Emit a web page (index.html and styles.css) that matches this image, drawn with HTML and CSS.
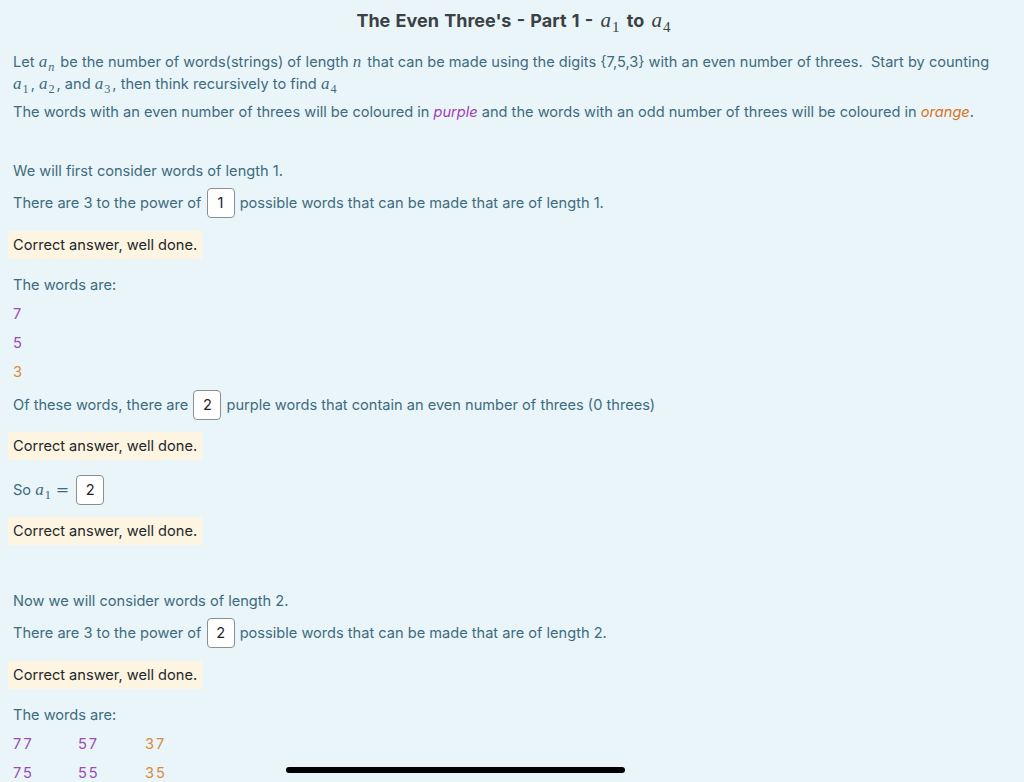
FILE: index.html
```
<!DOCTYPE html>
<html>
<head>
<meta charset="utf-8">
<link rel="stylesheet" href="styles.css">
</head>
<body>
<div class="page">
  <h1 class="title">The Even Three's - Part 1 - <span class="m">a<sub>1</sub></span> to <span class="m">a<sub>4</sub></span></h1>
  <p class="txt intro">Let <span class="m">a<sub class="i">n</sub></span> be the number of words(strings) of length <span class="m">n</span> that can be made using the digits {7,5,3} with an even number of threes.&nbsp; Start by counting <span class="m">a<sub>1</sub></span>, <span class="m">a<sub>2</sub></span>, and <span class="m">a<sub>3</sub></span>, then think recursively to find <span class="m">a<sub>4</sub></span></p>
  <p class="txt intro2">The words with an even number of threes will be coloured in <em class="purple">purple</em> and the words with an odd number of threes will be coloured in <em class="orange">orange</em>.</p>

  <p class="txt s-first">We will first consider words of length 1.</p>
  <div class="row r-after-line">There are 3 to the power of <span class="box">1</span> possible words that can be made that are of length 1.</div>
  <div class="correct c-after-row">Correct answer, well done.</div>
  <p class="txt w-after-correct">The words are:</p>
  <p class="txt word p">7</p>
  <p class="txt word p">5</p>
  <p class="txt word o">3</p>
  <div class="row r-after-word">Of these words, there are <span class="box">2</span> purple words that contain an even number of threes (0 threes)</div>
  <div class="correct c-after-row2">Correct answer, well done.</div>
  <div class="row r-after-correct">So <span class="m mq">a<sub>1</sub></span><span class="eq">=</span><span class="box">2</span></div>
  <div class="correct c-after-row2">Correct answer, well done.</div>

  <p class="txt s-second">Now we will consider words of length 2.</p>
  <div class="row r-after-line">There are 3 to the power of <span class="box">2</span> possible words that can be made that are of length 2.</div>
  <div class="correct c-after-row">Correct answer, well done.</div>
  <p class="txt w-after-correct">The words are:</p>
  <div class="grid word">
    <span class="p">77</span><span class="p">57</span><span class="o">37</span>
  </div>
  <div class="grid word">
    <span class="p">75</span><span class="p">55</span><span class="o">35</span>
  </div>
</div>
<div class="home-bar"></div>
</body>
</html>
```
FILE: styles.css
```
html, body {
  margin: 0;
  padding: 0;
  background: #e9f5f8;
}
body {
  font-family: Inter, "Noto Sans", "Liberation Sans", sans-serif;
  font-size: 14.6px;
  color: #3e6b80;
  height: 782px;
  overflow: hidden;
}
.page {
  display: flex;
  flex-direction: column;
  align-items: flex-start;
  padding: 8px 20px 0 13px;
}
.title {
  align-self: stretch;
  text-align: center;
  margin: 0;
  font-size: 18px;
  line-height: 24px;
  font-weight: 700;
  color: #3b4145;
  padding-left: 12px;
  word-spacing: 1px;
}
.title .m {
  font-weight: 400;
  font-size: 21px;
  margin: 0 2px;
}
.m {
  font-family: "Liberation Serif", "DejaVu Serif", serif;
  font-style: italic;
  font-size: 17px;
  color: #3e6b80;
}
.intro .m { margin-right: 2px; }
.title .m { color: #3b4145; }
.m sub {
  font-style: normal;
  font-size: 0.72em;
  vertical-align: -0.3em;
  line-height: 0;
  margin-left: 1px;
}
.m sub.i { font-style: italic; }
.txt {
  margin: 0;
  line-height: 22px;
}
.intro { margin-top: 18px; }
.intro2 { margin-top: 6px; }
.purple { color: #a33bb5; }
.orange { color: #d9731c; }
.s-first { margin-top: 37px; }
.s-second { margin-top: 45px; }
.row {
  display: flex;
  align-items: center;
  height: 30px;
  line-height: 22px;
  white-space: pre;
}
.r-after-line { margin-top: 6px; }
.r-after-word { margin-top: 7px; }
.r-after-correct { margin-top: 15px; }
.box {
  display: inline-flex;
  align-items: center;
  justify-content: center;
  box-sizing: border-box;
  width: 28px;
  height: 30px;
  margin: 0 1px 0 1px;
  border: 1px solid #8a8f92;
  border-radius: 4px;
  background: #ffffff;
  color: #1f2328;
}
.mq { margin-left: 0; }
.eq {
  font-family: "DejaVu Sans", sans-serif;
  font-size: 16px;
  margin: 0 6px 0 5px;
}
.correct {
  margin-left: -5px;
  padding: 0 5px;
  height: 28px;
  line-height: 28px;
  background: #fdf5e2;
  color: #23272a;
}
.c-after-row { margin-top: 13px; }
.c-after-row2 { margin-top: 12px; }
.w-after-correct { margin-top: 15px; }
.word { margin-top: 7px; }
.p { color: #9b4bb3; }
.o { color: #d98a3f; }
.grid {
  display: grid;
  grid-template-columns: 65px 67px 40px;
  line-height: 22px;
}
.grid span { letter-spacing: 2px; }
.home-bar {
  position: absolute;
  left: 286px;
  top: 767px;
  width: 339px;
  height: 6px;
  border-radius: 3px;
  background: #000;
}
```
